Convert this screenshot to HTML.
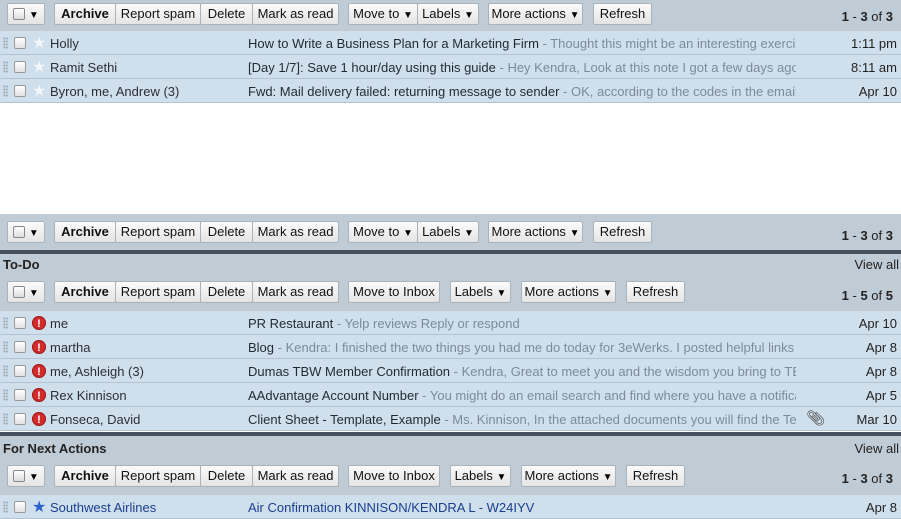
<!DOCTYPE html>
<html><head><meta charset="utf-8"><style>
*{margin:0;padding:0;box-sizing:border-box}
body{width:901px;height:508px;overflow:hidden;background:#fff;font-family:"Liberation Sans",Arial,sans-serif;font-size:13px;color:#222;position:relative}
.tb{position:absolute;left:0;width:901px;background:#bfcbd5}
.b{position:absolute;height:22px;background:linear-gradient(#fbfbfb,#e4e4e4);border:1px solid #a9b3bc;border-radius:2px;font-size:13px;line-height:20px;text-align:center;color:#111;white-space:nowrap}
.b.bold{font-weight:bold}
.cb{display:inline-block;width:12px;height:12px;border:1px solid #888;border-radius:2px;background:linear-gradient(#fff,#ddd);vertical-align:-2px}
.ar{font-size:10px;color:#000}
.cnt{position:absolute;right:8px;font-size:13px}
.row{position:absolute;left:0;width:901px;height:24px;background:#d0dfec;border-bottom:1px solid #b3c3d1;white-space:nowrap}
.row .dr{position:absolute;left:3px;top:6px;width:5px;height:12px;background:radial-gradient(circle,#9aa8b4 0.8px,transparent 1.2px) 0 0/2.5px 3px}
.row .c{position:absolute;left:14px;top:6px;width:12px;height:12px;border:1px solid #999;border-radius:2px;background:linear-gradient(#fff,#e2e2e2)}
.row .st{position:absolute;left:32px;top:2px;font-size:16px;color:#f4f7fa}
.row .imp{position:absolute;left:32px;top:5px;width:14px;height:14px;border-radius:50%;background:#d42a2a;color:#fff;font-weight:bold;font-size:11px;line-height:14px;text-align:center;border:1px solid #9b1414}
.row .s{position:absolute;left:50px;top:5px;color:#2a2f36}
.row .sub{position:absolute;left:248px;top:5px;width:548px;overflow:hidden;color:#1f2a36}
.row .sub span{color:#7b8b9c}
.row .d{position:absolute;right:4px;top:5px}
.dark{position:absolute;left:0;width:901px;height:4px;background:#46505f}
.hd{position:absolute;left:0;width:901px;background:#bfcbd5}
.hd b{position:absolute;left:3px;font-size:13px}
.hd .va{position:absolute;right:2px}
</style></head><body>

<div class="tb" style="top:0;height:31px"></div>
<div class="b" style="left:7px;top:3px;width:38px"><span class="cb"></span> <span class="ar">▼</span></div>
<div class="b bold" style="left:54px;top:3px;width:62px">Archive</div>
<div class="b" style="left:115px;top:3px;width:86px">Report spam</div>
<div class="b" style="left:200px;top:3px;width:53px">Delete</div>
<div class="b" style="left:252px;top:3px;width:87px">Mark as read</div>
<div class="b" style="left:348px;top:3px;width:70px">Move to <span class="ar">▼</span></div>
<div class="b" style="left:417px;top:3px;width:62px">Labels <span class="ar">▼</span></div>
<div class="b" style="left:488px;top:3px;width:95px">More actions <span class="ar">▼</span></div>
<div class="b" style="left:593px;top:3px;width:59px">Refresh</div>
<div class="cnt" style="top:9px"><b>1</b> - <b>3</b> of <b>3</b></div>

<div class="row" style="top:31px"><i class="dr"></i><i class="c"></i><span class="st">★</span><span class="s">Holly</span><div class="sub">How to Write a Business Plan for a Marketing Firm <span>- Thought this might be an interesting exercise</span></div><span class="d">1:11 pm</span></div>
<div class="row" style="top:55px"><i class="dr"></i><i class="c"></i><span class="st">★</span><span class="s">Ramit Sethi</span><div class="sub">[Day 1/7]: Save 1 hour/day using this guide <span>- Hey Kendra, Look at this note I got a few days ago.</span></div><span class="d">8:11 am</span></div>
<div class="row" style="top:79px"><i class="dr"></i><i class="c"></i><span class="st">★</span><span class="s">Byron, me, Andrew (3)</span><div class="sub">Fwd: Mail delivery failed: returning message to sender <span>- OK, according to the codes in the email,</span></div><span class="d">Apr 10</span></div>

<div class="tb" style="top:214px;height:36px"></div>
<div class="b" style="left:7px;top:221px;width:38px"><span class="cb"></span> <span class="ar">▼</span></div>
<div class="b bold" style="left:54px;top:221px;width:62px">Archive</div>
<div class="b" style="left:115px;top:221px;width:86px">Report spam</div>
<div class="b" style="left:200px;top:221px;width:53px">Delete</div>
<div class="b" style="left:252px;top:221px;width:87px">Mark as read</div>
<div class="b" style="left:348px;top:221px;width:70px">Move to <span class="ar">▼</span></div>
<div class="b" style="left:417px;top:221px;width:62px">Labels <span class="ar">▼</span></div>
<div class="b" style="left:488px;top:221px;width:95px">More actions <span class="ar">▼</span></div>
<div class="b" style="left:593px;top:221px;width:59px">Refresh</div>
<div class="cnt" style="top:228px"><b>1</b> - <b>3</b> of <b>3</b></div>

<div class="dark" style="top:250px"></div>
<div class="hd" style="top:254px;height:57px"><b style="top:3px">To-Do</b><span class="va" style="top:3px">View all</span></div>
<div class="b" style="left:7px;top:281px;width:38px"><span class="cb"></span> <span class="ar">▼</span></div>
<div class="b bold" style="left:54px;top:281px;width:62px">Archive</div>
<div class="b" style="left:115px;top:281px;width:86px">Report spam</div>
<div class="b" style="left:200px;top:281px;width:53px">Delete</div>
<div class="b" style="left:252px;top:281px;width:87px">Mark as read</div>
<div class="b" style="left:348px;top:281px;width:92px">Move to Inbox</div>
<div class="b" style="left:450px;top:281px;width:61px">Labels <span class="ar">▼</span></div>
<div class="b" style="left:521px;top:281px;width:95px">More actions <span class="ar">▼</span></div>
<div class="b" style="left:626px;top:281px;width:59px">Refresh</div>
<div class="cnt" style="top:288px"><b>1</b> - <b>5</b> of <b>5</b></div>

<div class="row" style="top:311px"><i class="dr"></i><i class="c"></i><span class="imp">!</span><span class="s">me</span><div class="sub">PR Restaurant <span>- Yelp reviews Reply or respond</span></div><span class="d">Apr 10</span></div>
<div class="row" style="top:335px"><i class="dr"></i><i class="c"></i><span class="imp">!</span><span class="s">martha</span><div class="sub">Blog <span>- Kendra: I finished the two things you had me do today for 3eWerks. I posted helpful links fo</span></div><span class="d">Apr 8</span></div>
<div class="row" style="top:359px"><i class="dr"></i><i class="c"></i><span class="imp">!</span><span class="s">me, Ashleigh (3)</span><div class="sub">Dumas TBW Member Confirmation <span>- Kendra, Great to meet you and the wisdom you bring to TBW</span></div><span class="d">Apr 8</span></div>
<div class="row" style="top:383px"><i class="dr"></i><i class="c"></i><span class="imp">!</span><span class="s">Rex Kinnison</span><div class="sub">AAdvantage Account Number <span>- You might do an email search and find where you have a notification</span></div><span class="d">Apr 5</span></div>
<div class="row" style="top:407px"><i class="dr"></i><i class="c"></i><span class="imp">!</span><span class="s">Fonseca, David</span><div class="sub" style="width:548px">Client Sheet - Template, Example <span>- Ms. Kinnison, In the attached documents you will find the Template</span></div><span style="position:absolute;left:806px;top:2px;font-size:15px;color:#444">📎︎</span><span class="d">Mar 10</span></div>

<div class="dark" style="top:432px"></div>
<div class="hd" style="top:436px;height:59px"><b style="top:5px">For Next Actions</b><span class="va" style="top:5px">View all</span></div>
<div class="b" style="left:7px;top:465px;width:38px"><span class="cb"></span> <span class="ar">▼</span></div>
<div class="b bold" style="left:54px;top:465px;width:62px">Archive</div>
<div class="b" style="left:115px;top:465px;width:86px">Report spam</div>
<div class="b" style="left:200px;top:465px;width:53px">Delete</div>
<div class="b" style="left:252px;top:465px;width:87px">Mark as read</div>
<div class="b" style="left:348px;top:465px;width:92px">Move to Inbox</div>
<div class="b" style="left:450px;top:465px;width:61px">Labels <span class="ar">▼</span></div>
<div class="b" style="left:521px;top:465px;width:95px">More actions <span class="ar">▼</span></div>
<div class="b" style="left:626px;top:465px;width:59px">Refresh</div>
<div class="cnt" style="top:471px"><b>1</b> - <b>3</b> of <b>3</b></div>

<div class="row" style="top:495px"><i class="dr"></i><i class="c"></i><span class="st" style="color:#2a62c9">★</span><span class="s" style="color:#1a3f8f">Southwest Airlines</span><div class="sub" style="color:#1a3f8f">Air Confirmation KINNISON/KENDRA L - W24IYV</div><span class="d">Apr 8</span></div>
</body></html>
